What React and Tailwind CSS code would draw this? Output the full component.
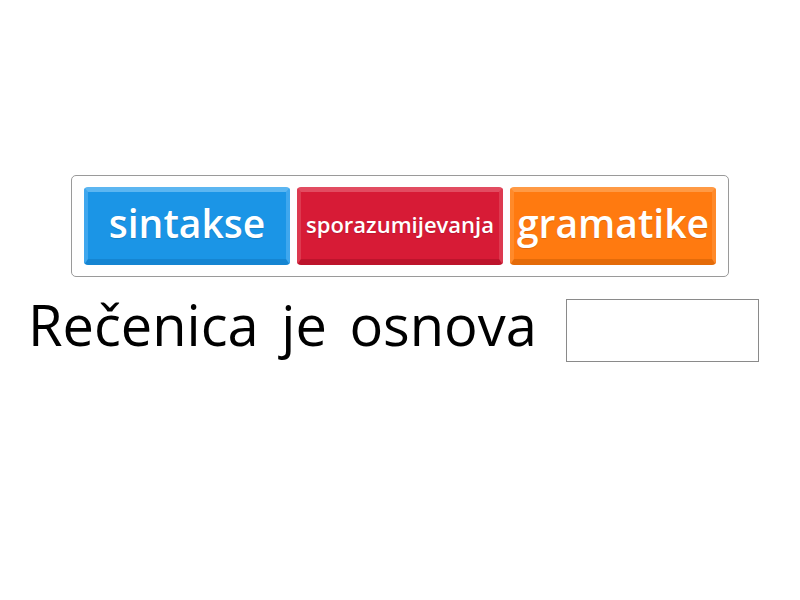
import React from "react";

const tiles = [
  {
    label: "sintakse",
    size: "text-[39px] -mt-[6px]",
    cls: "bg-[#1b95e6] border-t-[#5cb6f1] border-l-[#3fa7ee] border-r-[#3fa7ee] border-b-[#1585d2]",
  },
  {
    label: "sporazumijevanja",
    size: "text-[22px] -mt-[4px]",
    cls: "bg-[#d71b36] border-t-[#e24c61] border-l-[#dd3a50] border-r-[#dd3a50] border-b-[#bd142c]",
  },
  {
    label: "gramatike",
    size: "text-[39px] -mt-[6px]",
    cls: "bg-[#ff7a10] border-t-[#ff9a45] border-l-[#ff8a2a] border-r-[#ff8a2a] border-b-[#e46b09]",
  },
];

const Tile = ({ label, size, cls }) => (
  <div
    className={`w-[206px] h-[78px] rounded-[4px] border-t-[5px] border-b-[6px] border-x-[4px] flex items-center justify-center text-white font-semibold ${cls}`}
    style={{ textShadow: "0 1px 1px rgba(0,0,0,0.15)" }}
  >
    <span className={`leading-none ${size}`}>{label}</span>
  </div>
);

export default function App() {
  return (
    <div className="w-[800px] h-[600px] bg-white font-['Open_Sans',sans-serif] pt-[175px]">
      <div className="mx-auto w-[658px] border border-[#9a9a9a] rounded-[5px] px-[12px] py-[11px] flex gap-[7px]">
        {tiles.map((t) => (
          <Tile key={t.label} {...t} />
        ))}
      </div>
      <div className="flex items-start mt-[19px] pl-[28px]">
        <div className="text-[56px] leading-none text-black [word-spacing:8px]">
          Rečenica je osnova
        </div>
        <div className="ml-[29px] mt-[3px] w-[193px] h-[63px] border border-[#8a8a8a] bg-white" />
      </div>
    </div>
  );
}
